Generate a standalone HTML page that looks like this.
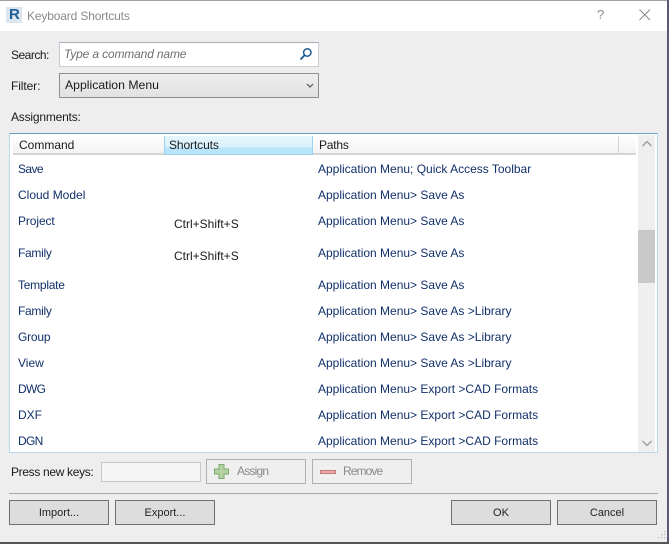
<!DOCTYPE html>
<html><head><meta charset="utf-8"><style>
html,body{margin:0;padding:0}
body{width:669px;height:544px;position:relative;overflow:hidden;background:#eeeeee;font-family:"Liberation Sans",sans-serif;font-size:12px;color:#1a1a1a}
div,span.t{position:absolute;box-sizing:border-box}
.t{white-space:nowrap;line-height:16px;height:16px}
.c{color:#12306a}
.b{border:1px solid #707070;background:#dddddd;height:25px;top:500px;text-align:center;line-height:24px;color:#222;font-size:11px}
.d{border:1px solid #b0b0b0;background:#efefef;height:25px;top:459px;width:100px}
</style></head><body>
<div style="left:0;top:0;width:669px;height:31px;background:#fff"></div>
<div style="left:0;top:0;width:669px;height:1px;background:#a0a0a0"></div>
<div style="left:667px;top:0;width:2px;height:544px;background:#5a5a78"></div>
<div style="left:0;top:542px;width:669px;height:2px;background:#555"></div>
<div style="left:6px;top:7px;width:16px;height:16px;background:#dbe6f0"></div>
<div class="t" style="left:9px;top:6px;font-weight:bold;font-size:15px;line-height:18px;height:18px;color:#1f5f94">R</div>
<div class="t" style="left:27px;top:8px;color:#8a8a8a;letter-spacing:-.15px">Keyboard Shortcuts</div>
<div class="t" style="left:597px;top:7px;color:#8c8c8c;font-size:13px">?</div>
<svg style="position:absolute;left:639px;top:9px" width="12" height="12"><path d="M.5.5L11 11M11 .5L.5 11" stroke="#8c8c8c" fill="none"/></svg>

<div class="t" style="left:11px;top:47px;letter-spacing:-.5px">Search:</div>
<div style="left:59px;top:42px;width:260px;height:25px;background:#fff;border:1px solid #c4ccd6;border-top-color:#aab0b8"></div>
<div class="t" style="left:64px;top:46px;font-style:italic;color:#6f6f6f;letter-spacing:-.15px">Type a command name</div>
<svg style="position:absolute;left:299px;top:47px" width="14" height="14"><circle cx="8.3" cy="5.5" r="3.7" fill="none" stroke="#1c5a92" stroke-width="1.5"/><path d="M5.5 8.3L1.5 12.5" stroke="#1c5a92" stroke-width="1.8"/></svg>
<div class="t" style="left:11px;top:78px;letter-spacing:-.1px">Filter:</div>
<div style="left:59px;top:73px;width:260px;height:25px;background:linear-gradient(#eeeeee,#e2e2e2);border:1px solid #8f8f8f"></div>
<div class="t" style="left:65px;top:77px;font-size:12.25px">Application Menu</div>
<svg style="position:absolute;left:306px;top:83px" width="8" height="6"><path d="M1 1L4 4L7 1" stroke="#555" stroke-width="1.2" fill="none"/></svg>
<div class="t" style="left:11px;top:109px;letter-spacing:-.2px">Assignments:</div>

<div style="left:9px;top:133px;width:649px;height:320px;background:#fff;border:1px solid #b5d9ee;border-top-color:#6a9fc0"></div>
<div style="left:13px;top:136px;width:623px;height:19px;background:linear-gradient(#ffffff,#f3f3f3);border-bottom:2px solid #d5d5d5"></div>
<div style="left:164px;top:136px;width:149px;height:19px;background:linear-gradient(#e6f6fd 0,#d9f2fd 65%,#b8e5fa 65%,#b8e5fa 100%);border:1px solid #9fd2ee;border-top:0"></div>
<div style="left:618px;top:136px;width:1px;height:18px;background:#d5d5d5"></div>
<div class="t" style="left:19px;top:137px">Command</div>
<div class="t" style="left:169px;top:137px;letter-spacing:-.1px">Shortcuts</div>
<div class="t" style="left:319px;top:137px;letter-spacing:-.2px">Paths</div>
<div style="left:638px;top:135px;width:17px;height:317px;background:#efefef"></div>
<div style="left:638px;top:230px;width:17px;height:53px;background:#c9c9c9"></div>
<svg style="position:absolute;left:641px;top:140px" width="12" height="8"><path d="M1.5 6L6 1.5L10.5 6" stroke="#9a9a9a" stroke-width="1.3" fill="none"/></svg>
<svg style="position:absolute;left:641px;top:439px" width="12" height="8"><path d="M1.5 2L6 6.5L10.5 2" stroke="#9a9a9a" stroke-width="1.3" fill="none"/></svg>

<div class="t c" style="left:18px;top:161px;letter-spacing:-.6px">Save</div><div class="t c" style="left:318px;top:161px">Application Menu; Quick Access Toolbar</div>
<div class="t c" style="left:18px;top:187px">Cloud Model</div><div class="t c" style="left:318px;top:187px">Application Menu&gt; Save As</div>
<div class="t c" style="left:18px;top:213px;letter-spacing:-.1px">Project</div><div class="t" style="left:174px;top:216px">Ctrl+Shift+S</div><div class="t c" style="left:318px;top:213px">Application Menu&gt; Save As</div>
<div class="t c" style="left:18px;top:245px;letter-spacing:-.3px">Family</div><div class="t" style="left:174px;top:248px">Ctrl+Shift+S</div><div class="t c" style="left:318px;top:245px">Application Menu&gt; Save As</div>
<div class="t c" style="left:18px;top:277px;letter-spacing:-.25px">Template</div><div class="t c" style="left:318px;top:277px">Application Menu&gt; Save As</div>
<div class="t c" style="left:18px;top:303px;letter-spacing:-.3px">Family</div><div class="t c" style="left:318px;top:303px">Application Menu&gt; Save As &gt;Library</div>
<div class="t c" style="left:18px;top:329px;letter-spacing:-.2px">Group</div><div class="t c" style="left:318px;top:329px">Application Menu&gt; Save As &gt;Library</div>
<div class="t c" style="left:18px;top:355px">View</div><div class="t c" style="left:318px;top:355px">Application Menu&gt; Save As &gt;Library</div>
<div class="t c" style="left:18px;top:381px;letter-spacing:-.7px">DWG</div><div class="t c" style="left:318px;top:381px">Application Menu&gt; Export &gt;CAD Formats</div>
<div class="t c" style="left:18px;top:407px">DXF</div><div class="t c" style="left:318px;top:407px">Application Menu&gt; Export &gt;CAD Formats</div>
<div class="t c" style="left:18px;top:433px;letter-spacing:-.7px">DGN</div><div class="t c" style="left:318px;top:433px">Application Menu&gt; Export &gt;CAD Formats</div>

<div class="t" style="left:11px;top:464px;letter-spacing:-.33px">Press new keys:</div>
<div style="left:101px;top:462px;width:100px;height:20px;background:#f5f5f5;border:1px solid #c8c8c8"></div>
<div class="d" style="left:206px"></div>
<svg style="position:absolute;left:213px;top:463px" width="17" height="17"><path d="M6 1.5H11V6H15.5V11H11V15.5H6V11H1.5V6H6Z" fill="#b5d3a0" stroke="#7fa873"/></svg>
<div class="t" style="left:237px;top:463px;color:#8a8a8a;letter-spacing:-.8px">Assign</div>
<div class="d" style="left:312px"></div>
<div style="left:320px;top:470px;width:16px;height:4px;background:#e8a8a8;border:1px solid #c87878"></div>
<div class="t" style="left:343px;top:463px;color:#8a8a8a;letter-spacing:-.9px">Remove</div>
<div style="left:9px;top:493px;width:649px;height:1px;background:#a6a6a6"></div>
<div class="b" style="left:9px;width:100px">Import...</div>
<div class="b" style="left:115px;width:100px">Export...</div>
<div class="b" style="left:451px;width:100px">OK</div>
<div class="b" style="left:557px;width:100px">Cancel</div>
<svg style="position:absolute;left:655px;top:530px" width="11" height="11" fill="#b5b5b5"><rect x="9" y="1" width="1.2" height="1.2"/><rect x="6" y="4" width="1.2" height="1.2"/><rect x="9" y="4" width="1.2" height="1.2"/><rect x="3" y="7" width="1.2" height="1.2"/><rect x="6" y="7" width="1.2" height="1.2"/><rect x="9" y="7" width="1.2" height="1.2"/></svg>
</body></html>
